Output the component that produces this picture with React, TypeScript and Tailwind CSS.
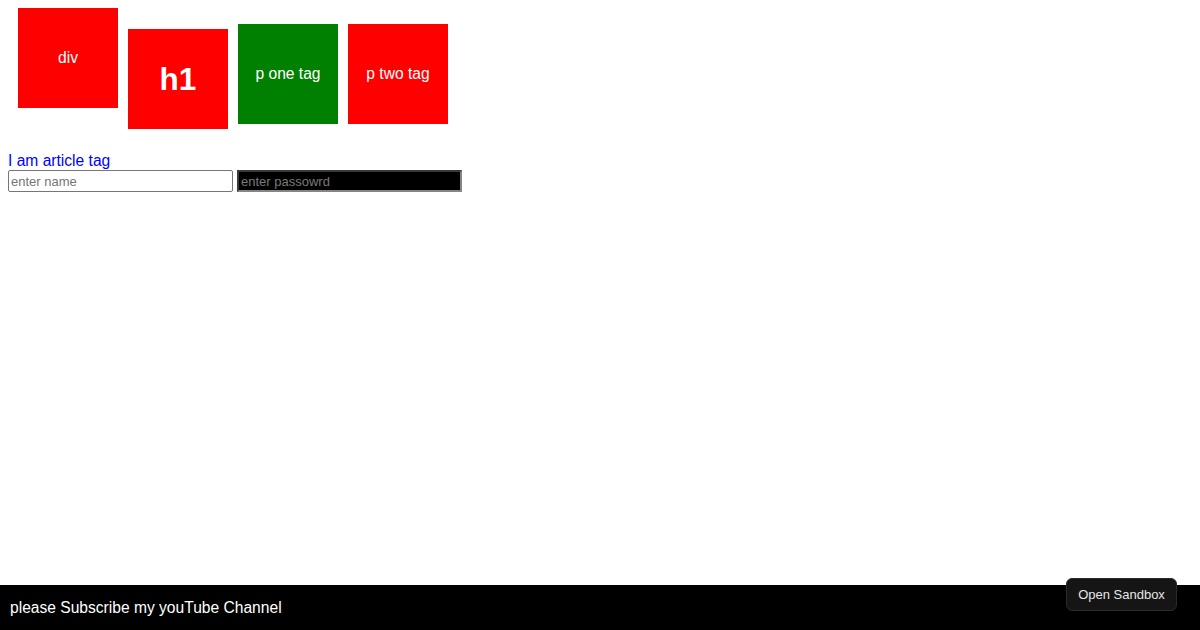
export default function App() {
  return (
    <div className="relative w-[1200px] h-[630px] bg-white overflow-hidden font-['Liberation_Sans',Arial,sans-serif]">
      {/* tag boxes */}
      <div className="flex items-start gap-[10px] pl-[18px]">
        <div className="mt-[8px] w-[100px] h-[100px] bg-[#ff0000] text-white text-center leading-[100px] text-[15.6px]">div</div>
        <h1 className="mt-[29px] w-[100px] h-[100px] bg-[#ff0000] text-white text-center leading-[100px] text-[31.5px] font-bold">h1</h1>
        <p className="mt-[24px] w-[100px] h-[100px] bg-[#008000] text-white text-center leading-[100px] text-[15.6px]">p one tag</p>
        <p className="mt-[24px] w-[100px] h-[100px] bg-[#ff0000] text-white text-center leading-[100px] text-[15.6px]">p two tag</p>
      </div>

      <div className="px-[8px] mt-[23px]">
        <article className="text-[15.6px] leading-[18px] text-[#0000ff]">I am article tag</article>
        <div className="flex gap-[4px]">
          <input
            type="text"
            placeholder="enter name"
            className="w-[225px] h-[22px] border border-[#767676] rounded-[2px] px-[2px] text-[13px] placeholder:text-[#757575] outline-none"
          />
          <input
            type="password"
            placeholder="enter passowrd"
            className="w-[225px] h-[22px] bg-black border-2 border-[#858585] border-t-[#3a3a3a] border-l-[#3a3a3a] px-[2px] text-[13px] text-white placeholder:text-[#7a7a7a] outline-none"
          />
        </div>
      </div>

      {/* footer */}
      <footer className="absolute left-0 bottom-0 w-full h-[45px] bg-black flex items-center px-[10px]">
        <span className="text-white text-[15.6px] mt-[1px]">please Subscribe my youTube Channel</span>
      </footer>

      <button className="absolute left-[1066px] top-[578px] w-[111px] h-[33px] bg-[#151515] border border-[#2a2a2a] rounded-[6px] text-[13px] text-[#e6e6e6]">
        Open Sandbox
      </button>
    </div>
  );
}
